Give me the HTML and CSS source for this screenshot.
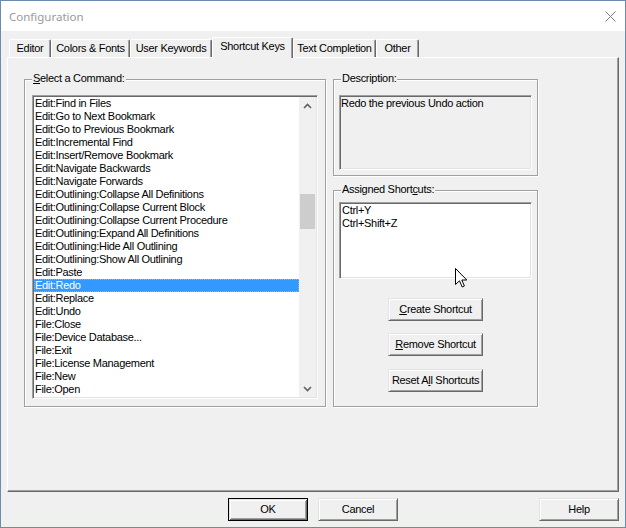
FILE: index.html
```html
<!DOCTYPE html>
<html>
<head>
<meta charset="utf-8">
<title>Configuration</title>
<link rel="stylesheet" href="styles.css">
</head>
<body>
<div class="window">
  <div class="titlebar">
    <span class="title">Configuration</span>
    <svg class="close" width="11" height="11" viewBox="0 0 11 11"><path d="M0.5 0.5 L10.5 10.5 M10.5 0.5 L0.5 10.5" stroke="#7a7a7a" stroke-width="1" fill="none"/></svg>
  </div>
  <div class="body">
    <div class="tabs">
      <div class="tab tab-editor">Editor</div>
      <div class="tab tab-colors">Colors &amp; Fonts</div>
      <div class="tab tab-keywords">User Keywords</div>
      <div class="tab tab-shortcut active">Shortcut Keys</div>
      <div class="tab tab-text">Text Completion</div>
      <div class="tab tab-other">Other</div>
    </div>
    <div class="panel">
      <div class="group group-commands">
        <span class="legend"><u>S</u>elect a Command:</span>
        <div class="listbox">
          <ul class="items">
            <li class="item">Edit:Find in Files</li>
            <li class="item">Edit:Go to Next Bookmark</li>
            <li class="item">Edit:Go to Previous Bookmark</li>
            <li class="item">Edit:Incremental Find</li>
            <li class="item">Edit:Insert/Remove Bookmark</li>
            <li class="item">Edit:Navigate Backwards</li>
            <li class="item">Edit:Navigate Forwards</li>
            <li class="item">Edit:Outlining:Collapse All Definitions</li>
            <li class="item">Edit:Outlining:Collapse Current Block</li>
            <li class="item">Edit:Outlining:Collapse Current Procedure</li>
            <li class="item">Edit:Outlining:Expand All Definitions</li>
            <li class="item">Edit:Outlining:Hide All Outlining</li>
            <li class="item">Edit:Outlining:Show All Outlining</li>
            <li class="item">Edit:Paste</li>
            <li class="item selected">Edit:Redo</li>
            <li class="item">Edit:Replace</li>
            <li class="item">Edit:Undo</li>
            <li class="item">File:Close</li>
            <li class="item">File:Device Database...</li>
            <li class="item">File:Exit</li>
            <li class="item">File:License Management</li>
            <li class="item">File:New</li>
            <li class="item">File:Open</li>
          </ul>
          <div class="vscroll">
            <div class="sb-btn"><svg width="9" height="6" viewBox="0 0 9 6"><path d="M1 5 L4.5 1.5 L8 5" stroke="#606060" stroke-width="1.6" fill="none"/></svg></div>
            <div class="sb-track"><div class="sb-thumb" style="margin-top:80px"></div></div>
            <div class="sb-btn"><svg width="9" height="6" viewBox="0 0 9 6"><path d="M1 1 L4.5 4.5 L8 1" stroke="#606060" stroke-width="1.6" fill="none"/></svg></div>
          </div>
        </div>
      </div>
      <div class="col-right">
        <div class="group group-desc">
          <span class="legend">Description:</span>
          <div class="textbox">Redo the previous Undo action</div>
        </div>
        <div class="group group-assigned">
          <span class="legend">Assigned Short<u>c</u>uts:</span>
          <div class="shortlist">
            <div class="item">Ctrl+Y</div>
            <div class="item">Ctrl+Shift+Z</div>
          </div>
          <button class="btn btn-create"><u>C</u>reate Shortcut</button>
          <button class="btn btn-remove"><u>R</u>emove Shortcut</button>
          <button class="btn btn-reset">Reset A<u>l</u>l Shortcuts</button>
        </div>
      </div>
    </div>
    <div class="footer">
      <button class="btn btn-dlg btn-ok default">OK</button>
      <button class="btn btn-dlg btn-cancel">Cancel</button>
      <button class="btn btn-dlg btn-help">Help</button>
    </div>
  </div>
  <svg class="cursor" width="13" height="21" viewBox="0 0 13 21"><path d="M0.5 0.5 L0.5 16.5 L4.5 12.8 L7.2 19 L9.4 18 L6.8 12 L11.8 12 Z" fill="#ffffff" stroke="#000000" stroke-width="1" stroke-linejoin="miter"/></svg>
</div>
</body>
</html>
```

FILE: styles.css
```css
* { box-sizing: border-box; }

html, body {
  margin: 0;
  padding: 0;
  background: #f0f0f0;
}

body {
  font-family: "Liberation Sans", Arial, sans-serif;
  font-size: 11px;
  letter-spacing: -0.3px;
  color: #000;
}

.window {
  position: relative;
  width: 626px;
  height: 528px;
  border: 1px solid #6a8caf;
  background: #f0f0f0;
  display: flex;
  flex-direction: column;
}

.titlebar {
  height: 30px;
  background: #ffffff;
  display: flex;
  align-items: center;
  justify-content: space-between;
  padding: 0 9px 0 8px;
}

.title {
  font-family: "Noto Sans", "Open Sans", sans-serif;
  font-size: 11.5px;
  letter-spacing: 0;
  color: #9a9a9a;
}

.close { display: block; }

.body {
  flex: 1;
  display: flex;
  flex-direction: column;
  padding: 6px 6px 6px 6px;
}

/* Tabs */
.tabs {
  height: 20px;
  display: flex;
  align-items: flex-end;
  padding-left: 2px;
  position: relative;
  z-index: 1;
}

.tab {
  height: 18px;
  line-height: 13px;
  padding-top: 2px;
  text-align: center;
  white-space: nowrap;
  background: #f0f0f0;
  border-top: 1px solid #ffffff;
  border-left: 1px solid #ffffff;
  border-right: 1px solid #696969;
  box-shadow: inset -1px 0 #a0a0a0;
  border-top-left-radius: 2px;
  border-top-right-radius: 2px;
}

.tab.active {
  height: 21px;
  margin-bottom: -1px;
}

.tab-editor { width: 42px; }
.tab-colors { width: 79px; }
.tab-keywords { width: 82px; }
.tab-shortcut { width: 81px; }
.tab-text { width: 83px; }
.tab-other { width: 43px; }

/* Panel */
.panel {
  height: 435px;
  border: 1px solid;
  border-color: #ffffff #696969 #696969 #ffffff;
  box-shadow: inset -1px -1px #a0a0a0;
  padding: 21px 0 0 16px;
  display: flex;
  align-items: flex-start;
  gap: 7px;
}

/* Group boxes */
.group {
  position: relative;
  border: 1px solid #a0a0a0;
  box-shadow: inset 1px 1px #ffffff, 1px 1px #ffffff;
}

.legend {
  position: absolute;
  top: -8px;
  left: 7px;
  padding: 0 1px;
  line-height: 13px;
  background: #f0f0f0;
  white-space: nowrap;
}

.group-commands {
  width: 302px;
  height: 328px;
  padding: 15px 7px 7px 7px;
}

/* Sunken fields */
.listbox, .textbox, .shortlist {
  border: 1px solid;
  border-color: #a0a0a0 #ffffff #ffffff #a0a0a0;
  box-shadow: inset 1px 1px #696969, inset -1px -1px #e3e3e3;
  padding: 1px;
}

.listbox {
  width: 286px;
  height: 304px;
  background: #ffffff;
  display: flex;
}

.items {
  flex: 1;
  list-style: none;
  margin: 0;
  padding: 0;
  overflow: hidden;
}

.item {
  height: 13px;
  line-height: 13px;
  padding-left: 1px;
  white-space: nowrap;
}

.item.selected {
  background: #3399ff;
  color: #ffffff;
  outline: 1px dotted #d9a070;
  outline-offset: -1px;
}

.vscroll {
  width: 17px;
  background: #f0f0f0;
  display: flex;
  flex-direction: column;
}

.sb-btn {
  height: 17px;
  display: flex;
  align-items: center;
  justify-content: center;
}

.sb-btn svg { display: block; }

.sb-track { flex: 1; }

.sb-thumb {
  width: 15px;
  height: 35px;
  margin-left: 1px;
  background: #cdcdcd;
}

/* Right column */
.col-right {
  width: 205px;
  display: flex;
  flex-direction: column;
}

.group-desc {
  height: 97px;
  padding: 15px 5px 5px 5px;
}

.textbox {
  height: 75px;
  background: #f0f0f0;
  line-height: 13px;
}

.group-assigned {
  margin-top: 14px;
  height: 217px;
  padding: 11px 5px 0 5px;
  display: flex;
  flex-direction: column;
  align-items: center;
}

.shortlist {
  width: 100%;
  height: 77px;
  background: #ffffff;
}

/* Buttons */
.btn {
  font-family: inherit;
  font-size: 11px;
  letter-spacing: -0.3px;
  color: #000;
  height: 23px;
  padding: 0;
  margin: 0;
  background: #f0f0f0;
  border: 1px solid;
  border-color: #e3e3e3 #696969 #696969 #e3e3e3;
  box-shadow: inset 1px 1px #ffffff, inset -1px -1px #a0a0a0;
  border-radius: 0;
  line-height: 13px;
  text-align: center;
}

.btn-create, .btn-remove, .btn-reset { width: 95px; }
.btn-create { margin-top: 19px; }
.btn-remove { margin-top: 12px; }
.btn-reset { margin-top: 13px; }

.footer {
  height: 23px;
  margin-top: 6px;
  display: flex;
}

.btn-dlg { width: 80px; }
.btn-ok { margin-left: 221px; }
.btn-cancel { margin-left: 10px; }
.btn-help { margin-left: auto; }

.btn.default {
  border-color: #000000;
  box-shadow: inset 1px 1px #e3e3e3, inset -1px -1px #696969, inset 2px 2px #ffffff, inset -2px -2px #a0a0a0;
}

.cursor {
  position: absolute;
  left: 454px;
  top: 267px;
}
```
